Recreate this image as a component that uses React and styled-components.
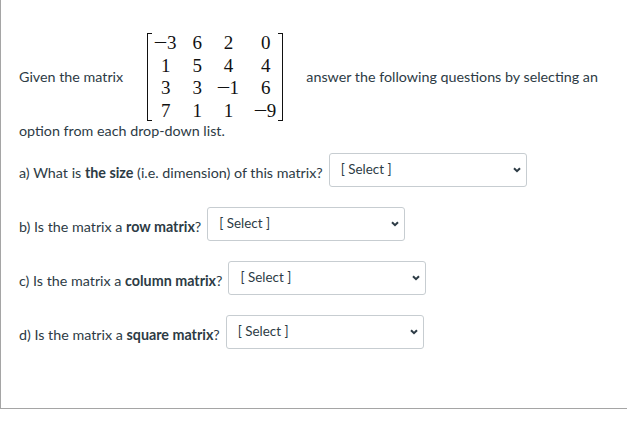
import styled, { createGlobalStyle } from "styled-components";

const GlobalStyle = createGlobalStyle`
  html, body {
    margin: 0;
    padding: 0;
    background: #ffffff;
  }
  body {
    font-family: Lato, "Liberation Sans", sans-serif;
    color: #2d3b45;
  }
`;

const Page = styled.div`
  box-sizing: border-box;
  width: 627px;
  height: 409px;
  border-left: 1px solid #a5a5a5;
  border-bottom: 1px solid #a5a5a5;
  padding: 32px 0 0 18px;
  font-size: 14.3px;
`;

const IntroLine = styled.div`
  display: flex;
  align-items: center;
  line-height: 20px;
`;

const Text = styled.span`
  white-space: nowrap;
`;

const Line = styled.div`
  line-height: 18px;
`;

const Matrix = styled.div`
  display: flex;
  align-items: stretch;
  margin: 0 23px 0 24px;
  font-family: "Liberation Serif", "DejaVu Serif", serif;
  font-size: 19px;
  color: #111;
`;

const Bracket = styled.div`
  width: 4px;
  margin: 1px 0;
  border: 1.5px solid #111;
  ${({ $side }) =>
    $side === "left" ? "border-right: none;" : "border-left: none;"}
`;

const Grid = styled.div`
  display: grid;
  grid-template-columns: repeat(4, auto);
  column-gap: 16px;
  padding: 0 2px 0 3px;
  line-height: 22.5px;
  text-align: center;
`;

const Minus = styled.span`
  display: inline-block;
  margin-right: 1px;
  transform: scaleX(1.3);
`;

const Questions = styled.div`
  display: flex;
  flex-direction: column;
  gap: 20px;
  margin-top: 13px;
`;

const Question = styled.div`
  display: flex;
  align-items: center;
  height: 34px;
  gap: 6px;
  white-space: nowrap;
`;

const QText = styled.span`
  line-height: 20px;
  margin-top: 6px;
`;

const Select = styled.div`
  box-sizing: border-box;
  display: flex;
  align-items: center;
  justify-content: space-between;
  width: 198px;
  height: 34px;
  padding: 0 5px 0 11px;
  border: 1px solid #c7cdd1;
  border-radius: 3px;
  background: #fff;
  font-size: 13.4px;
  color: #2d3b45;
`;

const SelectLabel = styled.span`
  margin-top: -3px;
`;

const Chevron = () => (
  <svg width="8" height="6" viewBox="0 0 8 6" aria-hidden="true">
    <path d="M1 1.2 L4 4.2 L7 1.2" fill="none" stroke="#2d3b45" strokeWidth="2" />
  </svg>
);

const rows = [
  ["-3", "6", "2", "0"],
  ["1", "5", "4", "4"],
  ["3", "3", "-1", "6"],
  ["7", "1", "1", "-9"],
];

const Cell = ({ value }) =>
  value.startsWith("-") ? (
    <span>
      <Minus>−</Minus>
      {value.slice(1)}
    </span>
  ) : (
    <span>{value}</span>
  );

const questions = [
  ["a) What is ", "the size", " (i.e. dimension) of this matrix?"],
  ["b) Is the matrix a ", "row matrix", "?"],
  ["c) Is the matrix a ", "column matrix", "?"],
  ["d) Is the matrix a ", "square matrix", "?"],
];

export default function App() {
  return (
    <>
      <GlobalStyle />
      <Page>
        <IntroLine>
          <Text>Given the matrix</Text>
          <Matrix>
            <Bracket $side="left" />
            <Grid>
              {rows.flat().map((v, i) => (
                <Cell key={i} value={v} />
              ))}
            </Grid>
            <Bracket $side="right" />
          </Matrix>
          <Text>answer the following questions by selecting an</Text>
        </IntroLine>
        <Line>option from each drop-down list.</Line>
        <Questions>
          {questions.map(([before, bold, after], i) => (
            <Question key={i}>
              <QText>
                {before}
                <strong>{bold}</strong>
                {after}
              </QText>
              <Select>
                <SelectLabel>[ Select ]</SelectLabel>
                <Chevron />
              </Select>
            </Question>
          ))}
        </Questions>
      </Page>
    </>
  );
}
